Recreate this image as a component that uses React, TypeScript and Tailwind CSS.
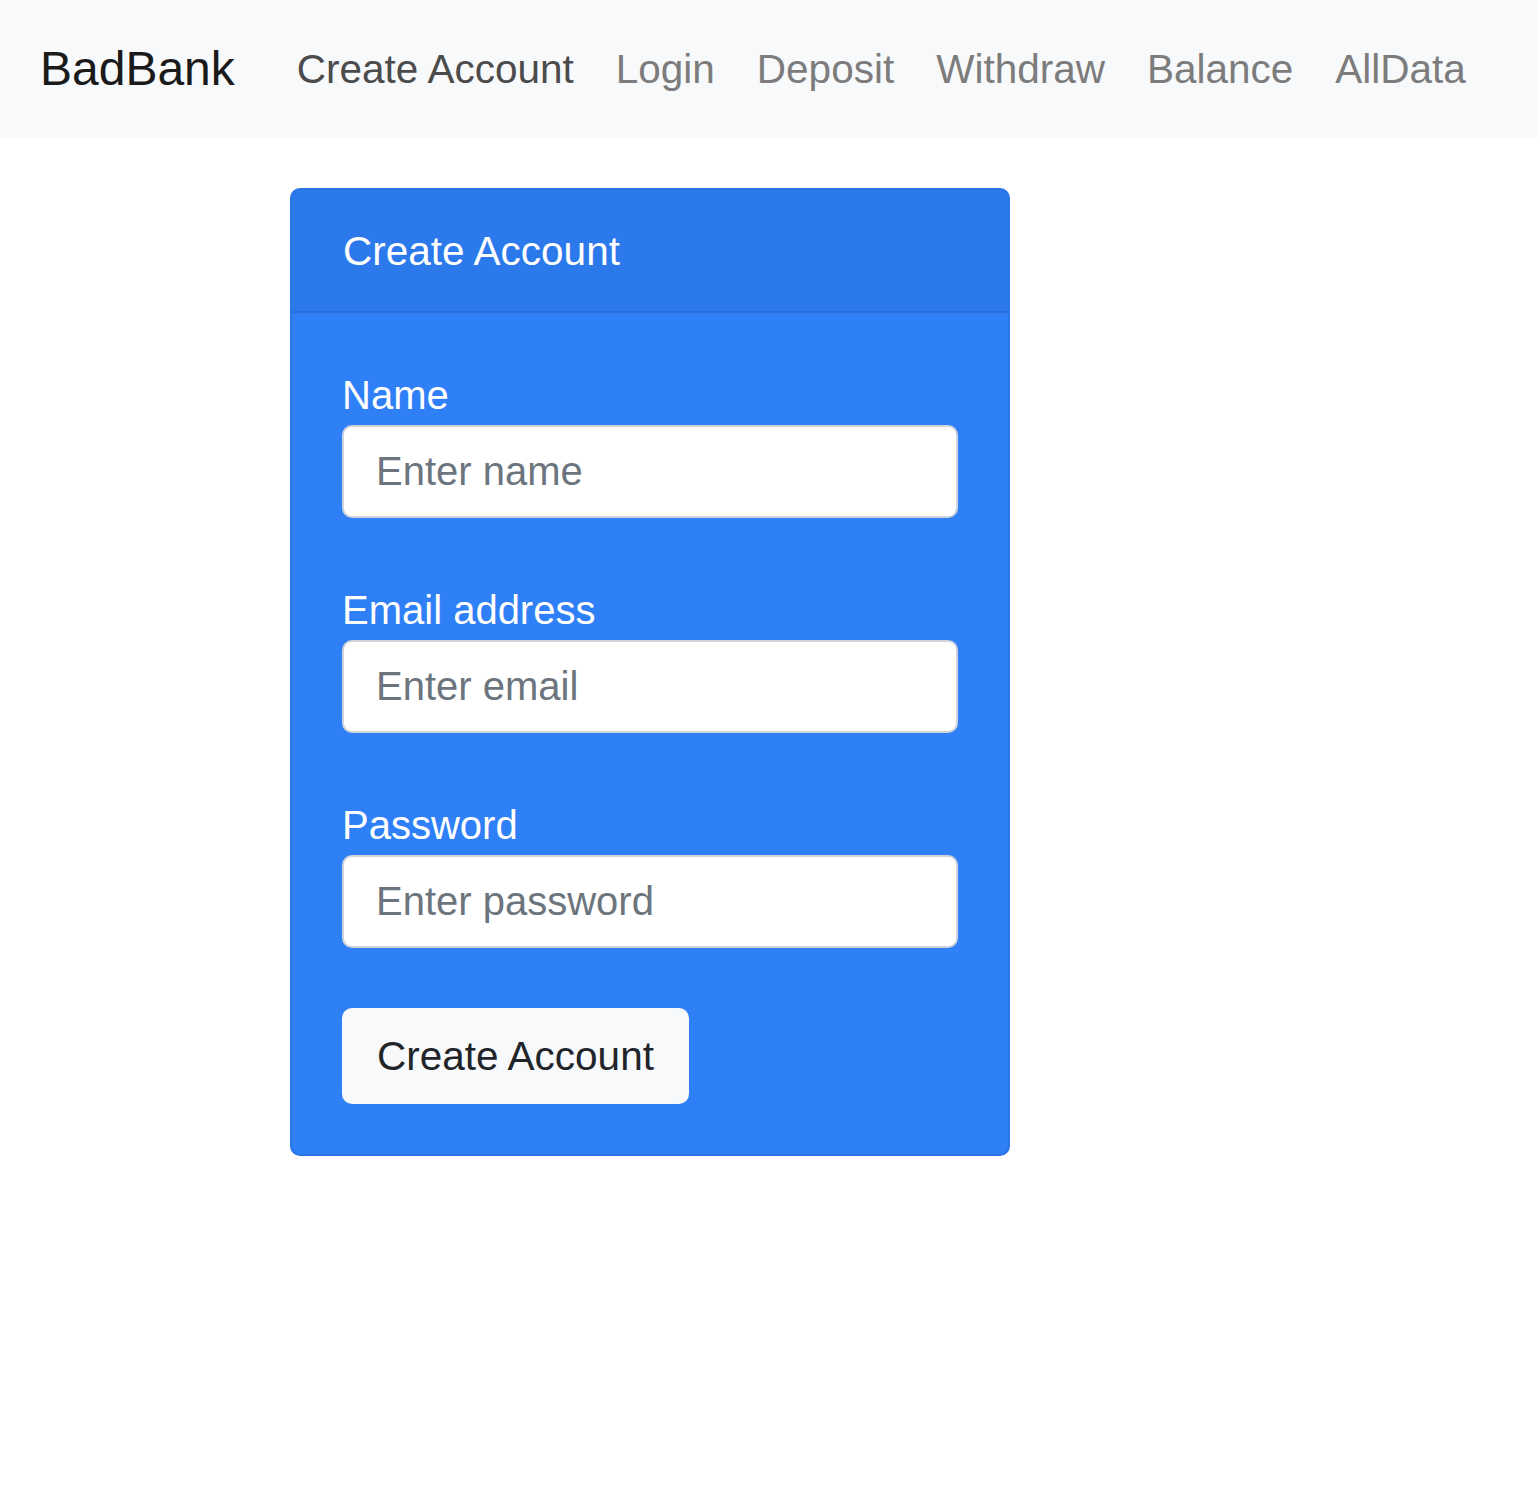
const links = ["Create Account", "Login", "Deposit", "Withdraw", "Balance", "AllData"];

const fields = [
  { id: "name", label: "Name", type: "text", placeholder: "Enter name" },
  { id: "email", label: "Email address", type: "email", placeholder: "Enter email" },
  { id: "password", label: "Password", type: "password", placeholder: "Enter password" },
];

const NavBar = () => {
  return (
    <nav className="flex h-[138px] items-center bg-[#f8f9fa] px-[40px]">
      <a href="#" className="mr-[41px] text-[48px] leading-[72px] text-[#1a1a1a]">
        BadBank
      </a>
      <ul className="flex items-center">
        {links.map((link, i) => (
          <li key={link}>
            <a
              href="#"
              className={
                i === 0
                  ? "block px-[21px] text-[40.5px] leading-[60px] text-[#4b4b4c]"
                  : "block px-[21px] text-[40.5px] leading-[60px] text-[#7c7c7d]"
              }
            >
              {link}
            </a>
          </li>
        ))}
      </ul>
    </nav>
  );
};

const CreateAccount = () => {
  return (
    <div className="ml-[290px] mt-[50px] w-[720px] overflow-hidden rounded-[10px] border-2 border-[#2b74e4] bg-[#2f7ff6] text-white">
      <div className="flex h-[123px] items-center border-b-2 border-[#2a6fd9] bg-[#2c79ec] px-[51px] text-[40.5px] leading-[60px]">
        Create Account
      </div>
      <form className="flex flex-col px-[50px] pb-[50px] pt-[52px]">
        {fields.map((f) => (
          <div key={f.id} className="mb-[62px] flex flex-col">
            <label htmlFor={f.id} className="text-[40px] leading-[60px]">
              {f.label}
            </label>
            <input
              id={f.id}
              type={f.type}
              placeholder={f.placeholder}
              className="h-[93px] w-full rounded-[10px] border-2 border-[#ced4da] bg-white px-[32px] text-[40px] text-[#495057] outline-none placeholder:text-[#6c757d]"
            />
          </div>
        ))}
        <div className="-mt-[2px]">
          <button
            type="submit"
            className="rounded-[10px] bg-[#f8f9fa] px-[35px] py-[18px] text-[40.5px] leading-[60px] text-[#212529]"
          >
            Create Account
          </button>
        </div>
      </form>
    </div>
  );
};

export default function App() {
  return (
    <div className="min-h-[1498px] bg-white font-['Liberation_Sans',Arial,sans-serif]">
      <NavBar />
      <CreateAccount />
    </div>
  );
}
